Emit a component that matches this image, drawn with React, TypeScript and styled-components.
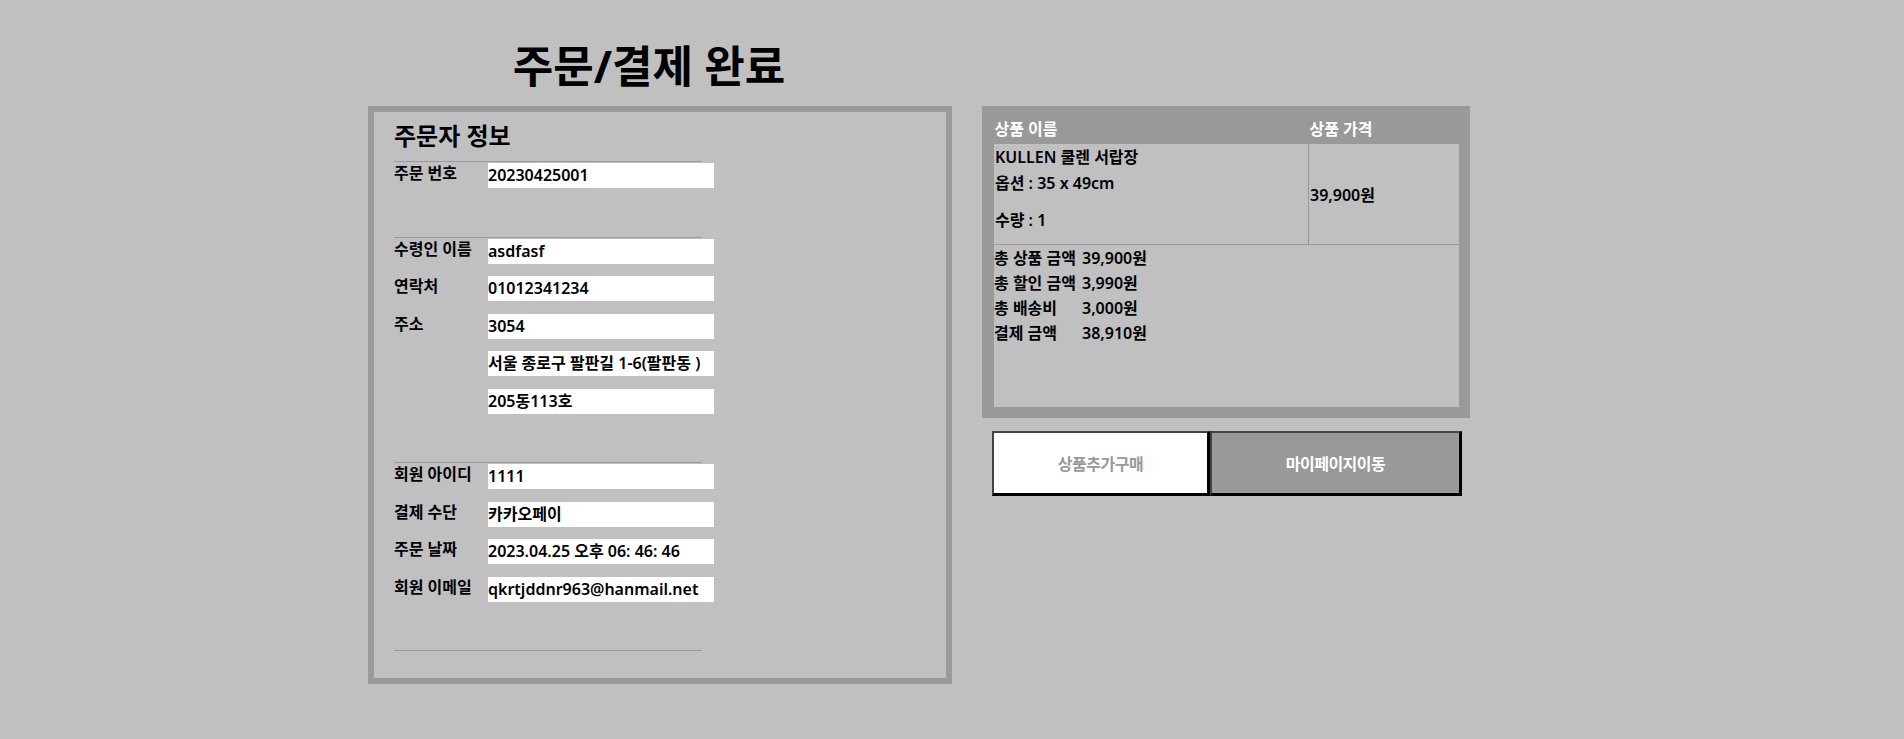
import styled, { createGlobalStyle } from 'styled-components';

type Field = { label: string; values: string[] };

const orderFields: Field[][] = [
  [{ label: '주문 번호', values: ['20230425001'] }],
  [
    { label: '수령인 이름', values: ['asdfasf'] },
    { label: '연락처', values: ['01012341234'] },
    { label: '주소', values: ['3054', '서울 종로구 팔판길 1-6(팔판동 )', '205동113호'] },
  ],
  [
    { label: '회원 아이디', values: ['1111'] },
    { label: '결제 수단', values: ['카카오페이'] },
    { label: '주문 날짜', values: ['2023.04.25 오후 06: 46: 46'] },
    { label: '회원 이메일', values: ['qkrtjddnr963@hanmail.net'] },
  ],
];

const totals = [
  { label: '총 상품 금액', value: '39,900원' },
  { label: '총 할인 금액', value: '3,990원' },
  { label: '총 배송비', value: '3,000원' },
  { label: '결제 금액', value: '38,910원' },
];

const App = () => {
  return (
    <>
      <GlobalStyle />
      <Page>
        <Title>주문/결제 완료</Title>
        <InfoPanel>
          <PanelHeading>주문자 정보</PanelHeading>
          {orderFields.map((section, i) => (
            <Section key={i}>
              <Divider />
              {section.map((field) =>
                field.values.map((v, j) => (
                  <FieldRow key={field.label + j}>
                    <FieldLabel>{j === 0 ? field.label : ''}</FieldLabel>
                    <FieldValue>{v}</FieldValue>
                  </FieldRow>
                ))
              )}
            </Section>
          ))}
          <Divider />
        </InfoPanel>

        <SideColumn>
          <ProductPanel>
            <ProductTable>
              <thead>
                <tr>
                  <HeadCell>상품 이름</HeadCell>
                  <HeadCell>상품 가격</HeadCell>
                </tr>
              </thead>
              <tbody>
                <tr>
                  <ItemCell>
                    <ItemLine>KULLEN 쿨렌 서랍장</ItemLine>
                    <ItemLine>옵션 : 35 x 49cm</ItemLine>
                    <ItemLine spaced>수량 : 1</ItemLine>
                  </ItemCell>
                  <PriceCell>39,900원</PriceCell>
                </tr>
                <tr>
                  <SummaryCell colSpan={2}>
                    {totals.map((t) => (
                      <SummaryLine key={t.label}>
                        <SummaryLabel>{t.label}</SummaryLabel>
                        {t.value}
                      </SummaryLine>
                    ))}
                  </SummaryCell>
                </tr>
              </tbody>
            </ProductTable>
          </ProductPanel>

          <ButtonRow>
            <ActionButton>상품추가구매</ActionButton>
            <ActionButton primary>마이페이지이동</ActionButton>
          </ButtonRow>
        </SideColumn>
      </Page>
    </>
  );
};

const GlobalStyle = createGlobalStyle`
  html, body {
    margin: 0;
    background: #c0c0c0;
  }
  body {
    font-family: "Noto Sans", "Noto Sans CJK KR", sans-serif;
    font-size: 16px;
    color: #000;
    min-height: 739px;
  }
`;

const Page = styled.div`
  width: 1168px;
  margin: 0 auto;
  padding-top: 33px;
  display: grid;
  grid-template-columns: 584px 488px;
  grid-template-rows: auto auto;
  column-gap: 30px;
  align-items: start;
`;

const Title = styled.h1`
  grid-column: 1;
  margin: 0 0 6px;
  padding-right: 22px;
  text-align: center;
  font-size: 44px;
  line-height: 67px;
  font-weight: 700;
`;

const InfoPanel = styled.div`
  grid-column: 1;
  grid-row: 2;
  border: 6px solid #999;
  padding: 0 20px 26px;
  height: 578px;
  box-sizing: border-box;
`;

const PanelHeading = styled.h2`
  margin: 0;
  padding-top: 8px;
  height: 41px;
  font-size: 24px;
  line-height: 32px;
  font-weight: 700;
`;

const Section = styled.div`
  padding-bottom: 36px;
`;

const Divider = styled.div`
  width: 308px;
  height: 1px;
  background: #999;
  margin-bottom: 1px;
`;

const FieldRow = styled.div`
  display: flex;
  height: 25px;
  margin-bottom: 12.5px;
`;

const FieldLabel = styled.div`
  width: 94px;
  font-weight: 700;
  line-height: 20px;
  white-space: nowrap;
`;

const FieldValue = styled.div`
  width: 226px;
  background: #fff;
  font-weight: 600;
  line-height: 25px;
  white-space: nowrap;
  overflow: hidden;
`;

const SideColumn = styled.div`
  grid-column: 2;
  grid-row: 2;
  display: flex;
  flex-direction: column;
`;

const ProductPanel = styled.div`
  background: #999;
  padding: 0 10px 10px 11px;
`;

const ProductTable = styled.table`
  width: 100%;
  border-collapse: collapse;
`;

const HeadCell = styled.th`
  height: 34px;
  padding: 0 0 3px 1px;
  text-align: left;
  vertical-align: bottom;
  color: #fff;
  font-weight: 700;
  &:first-child {
    width: 314px;
  }
`;

const ItemCell = styled.td`
  border: 1px solid #999;
  background: #c0c0c0;
  padding: 0 0 11px 1px;
  vertical-align: top;
  font-weight: 600;
`;

const ItemLine = styled.div<{ spaced?: boolean }>`
  line-height: 26px;
  margin-top: ${(p) => (p.spaced ? '11px' : '0')};
`;

const PriceCell = styled.td`
  border: 1px solid #999;
  background: #c0c0c0;
  padding: 0 0 0 1px;
  vertical-align: middle;
  font-weight: 600;
`;

const SummaryCell = styled.td`
  border: 1px solid #999;
  background: #c0c0c0;
  height: 161px;
  padding: 1px 0 0;
  vertical-align: top;
  font-weight: 600;
`;

const SummaryLine = styled.div`
  line-height: 25px;
  white-space: nowrap;
`;

const SummaryLabel = styled.span`
  display: inline-block;
  width: 88px;
  white-space: nowrap;
`;

const ButtonRow = styled.div`
  display: flex;
  margin: 13px 0 0 10px;
`;

const ActionButton = styled.button<{ primary?: boolean }>`
  height: 65px;
  width: ${(p) => (p.primary ? '252px' : '218px')};
  background: ${(p) => (p.primary ? '#999' : '#fff')};
  color: ${(p) => (p.primary ? '#fff' : '#999')};
  border-style: solid;
  border-width: 2px 3px 3px 2px;
  border-color: #444 #000 #000 #444;
  font-family: "Noto Sans", "Noto Sans CJK KR", sans-serif;
  font-size: 16px;
  letter-spacing: -0.5px;
  font-weight: 700;
  cursor: pointer;
`;

export default App;
